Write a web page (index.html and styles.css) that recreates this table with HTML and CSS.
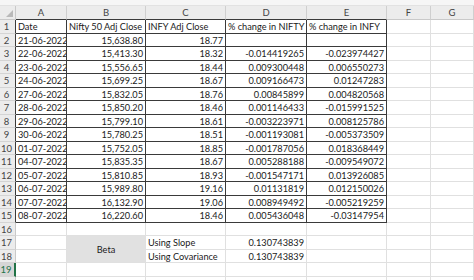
FILE: index.html
```html
<!DOCTYPE html>
<html>
<head>
<meta charset="utf-8">
<link rel="stylesheet" href="styles.css">
</head>
<body>
<div class="sheet">
  <div class="strip"></div>

  <div class="corner"><span class="tri"></span></div>
  <div class="ch e">A</div><div class="ch e">B</div><div class="ch e">C</div><div class="ch e">D</div><div class="ch e">E</div><div class="ch">F</div><div class="ch">G</div>

  <div class="rh e">1</div><div class="c d">Date</div><div class="c d">Nifty 50 Adj Close</div><div class="c d">INFY Adj Close</div><div class="c d">% change in NIFTY</div><div class="c d">% change in INFY</div><div class="c"></div><div class="c"></div>
  <div class="rh e">2</div><div class="c d">21-06-2022</div><div class="c d n">15,638.80</div><div class="c d n">18.77</div><div class="c d n"></div><div class="c d n"></div><div class="c"></div><div class="c"></div>
  <div class="rh e">3</div><div class="c d">22-06-2022</div><div class="c d n">15,413.30</div><div class="c d n">18.32</div><div class="c d n">-0.014419265</div><div class="c d n">-0.023974427</div><div class="c"></div><div class="c"></div>
  <div class="rh e">4</div><div class="c d">23-06-2022</div><div class="c d n">15,556.65</div><div class="c d n">18.44</div><div class="c d n">0.009300448</div><div class="c d n">0.006550273</div><div class="c"></div><div class="c"></div>
  <div class="rh e">5</div><div class="c d">24-06-2022</div><div class="c d n">15,699.25</div><div class="c d n">18.67</div><div class="c d n">0.009166473</div><div class="c d n">0.01247283</div><div class="c"></div><div class="c"></div>
  <div class="rh e">6</div><div class="c d">27-06-2022</div><div class="c d n">15,832.05</div><div class="c d n">18.76</div><div class="c d n">0.00845899</div><div class="c d n">0.004820568</div><div class="c"></div><div class="c"></div>
  <div class="rh e">7</div><div class="c d">28-06-2022</div><div class="c d n">15,850.20</div><div class="c d n">18.46</div><div class="c d n">0.001146433</div><div class="c d n">-0.015991525</div><div class="c"></div><div class="c"></div>
  <div class="rh e">8</div><div class="c d">29-06-2022</div><div class="c d n">15,799.10</div><div class="c d n">18.61</div><div class="c d n">-0.003223971</div><div class="c d n">0.008125786</div><div class="c"></div><div class="c"></div>
  <div class="rh e">9</div><div class="c d">30-06-2022</div><div class="c d n">15,780.25</div><div class="c d n">18.51</div><div class="c d n">-0.001193081</div><div class="c d n">-0.005373509</div><div class="c"></div><div class="c"></div>
  <div class="rh e">10</div><div class="c d">01-07-2022</div><div class="c d n">15,752.05</div><div class="c d n">18.85</div><div class="c d n">-0.001787056</div><div class="c d n">0.018368449</div><div class="c"></div><div class="c"></div>
  <div class="rh e">11</div><div class="c d">04-07-2022</div><div class="c d n">15,835.35</div><div class="c d n">18.67</div><div class="c d n">0.005288188</div><div class="c d n">-0.009549072</div><div class="c"></div><div class="c"></div>
  <div class="rh e">12</div><div class="c d">05-07-2022</div><div class="c d n">15,810.85</div><div class="c d n">18.93</div><div class="c d n">-0.001547171</div><div class="c d n">0.013926085</div><div class="c"></div><div class="c"></div>
  <div class="rh e">13</div><div class="c d">06-07-2022</div><div class="c d n">15,989.80</div><div class="c d n">19.16</div><div class="c d n">0.01131819</div><div class="c d n">0.012150026</div><div class="c"></div><div class="c"></div>
  <div class="rh e">14</div><div class="c d">07-07-2022</div><div class="c d n">16,132.90</div><div class="c d n">19.06</div><div class="c d n">0.008949492</div><div class="c d n">-0.005219259</div><div class="c"></div><div class="c"></div>
  <div class="rh e">15</div><div class="c d">08-07-2022</div><div class="c d n">16,220.60</div><div class="c d n">18.46</div><div class="c d n">0.005436048</div><div class="c d n">-0.03147954</div><div class="c"></div><div class="c"></div>
  <div class="rh">16</div><div class="c"></div><div class="c"></div><div class="c"></div><div class="c"></div><div class="c"></div><div class="c"></div><div class="c"></div>
  <div class="rh">17</div><div class="c"></div><div class="c beta">Beta</div><div class="c">Using Slope</div><div class="c n">0.130743839</div><div class="c"></div><div class="c"></div><div class="c"></div>
  <div class="rh">18</div><div class="c"></div><div class="c">Using Covariance</div><div class="c n">0.130743839</div><div class="c"></div><div class="c"></div><div class="c"></div>
  <div class="rh sel">19</div><div class="c"></div><div class="c"></div><div class="c"></div><div class="c"></div><div class="c"></div><div class="c"></div><div class="c"></div>
  <div class="rh"></div><div class="c"></div><div class="c"></div><div class="c"></div><div class="c"></div><div class="c"></div><div class="c"></div><div class="c"></div>
</div>
</body>
</html>
```

FILE: styles.css
```css
* { box-sizing: border-box; }
html, body { margin: 0; padding: 0; background: #fff; overflow: hidden; }
body { width: 474px; height: 280px; }

.sheet {
  display: grid;
  grid-template-columns: 16px 51px 79px 80px 81px 80px 44px 1fr;
  grid-template-rows: 6px 14px repeat(20, 13.5px);
  font-family: Lato, "Open Sans", sans-serif;
  font-size: 9.2px;
  color: #1a1a1a;
  width: 474px;
}

.strip { grid-column: 1 / -1; background: #f6f6f6; border-bottom: 1px solid #e2e2e2; }

.corner { background: #ececec; border-right: 1px solid #c9c9c9; border-bottom: 1px solid #c9c9c9; position: relative; }
.tri { position: absolute; right: 2px; bottom: 2px; width: 0; height: 0; border-left: 7px solid transparent; border-bottom: 7px solid #b9b9b9; }

.ch {
  background: #ececec;
  color: #444;
  text-align: center;
  line-height: 13px;
  font-size: 9.5px;
  border-right: 1px solid #cfcfcf;
  border-bottom: 1px solid #c9c9c9;
}
.ch.e { border-bottom-color: #3a3a3a; }

.rh {
  background: #ececec;
  color: #444;
  text-align: center;
  padding-right: 2px;
  line-height: 13px;
  font-size: 9.5px;
  border-right: 1px solid #c9c9c9;
  border-bottom: 1px solid #d4d4d4;
}
.rh.e { border-right-color: #3a3a3a; }
.rh.sel { background: #d6d6d6; color: #217346; border-right: 2px solid #217346; }

.c {
  border-right: 1px solid #e0e0e0;
  border-bottom: 1px solid #e0e0e0;
  padding: 0 2px;
  line-height: 13px;
  white-space: nowrap;
  overflow: hidden;
}
.c.d { border-right-color: #3a3a3a; border-bottom-color: #3a3a3a; }
.n { text-align: right; }

.beta {
  grid-row: span 2;
  background: #e1e1e1;
  display: flex;
  align-items: center;
  justify-content: center;
}
```
